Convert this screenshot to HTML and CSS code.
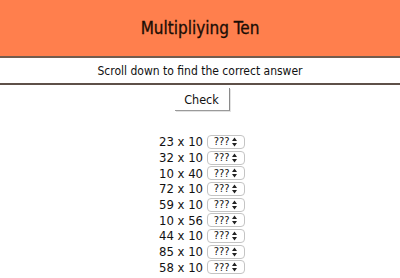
FILE: index.html
```html
<!DOCTYPE html>
<html>
<head>
<meta charset="utf-8">
<link rel="stylesheet" href="styles.css">
</head>
<body>
<header class="top">
  <h1 class="title">Multipliying Ten</h1>
</header>
<div class="info">Scroll down to find the correct answer</div>
<div class="actions"><button class="check">Check</button></div>
<div class="rows">
  <div class="row"><span class="q">23 x 10</span><span class="sel">???<svg class="arr" width="5" height="10" viewBox="0 0 5 10"><path d="M0 4 L2.5 0.5 L5 4Z M0 6 L2.5 9.5 L5 6Z" fill="#222"/></svg></span></div>
  <div class="row"><span class="q">32 x 10</span><span class="sel">???<svg class="arr" width="5" height="10" viewBox="0 0 5 10"><path d="M0 4 L2.5 0.5 L5 4Z M0 6 L2.5 9.5 L5 6Z" fill="#222"/></svg></span></div>
  <div class="row"><span class="q">10 x 40</span><span class="sel">???<svg class="arr" width="5" height="10" viewBox="0 0 5 10"><path d="M0 4 L2.5 0.5 L5 4Z M0 6 L2.5 9.5 L5 6Z" fill="#222"/></svg></span></div>
  <div class="row"><span class="q">72 x 10</span><span class="sel">???<svg class="arr" width="5" height="10" viewBox="0 0 5 10"><path d="M0 4 L2.5 0.5 L5 4Z M0 6 L2.5 9.5 L5 6Z" fill="#222"/></svg></span></div>
  <div class="row"><span class="q">59 x 10</span><span class="sel">???<svg class="arr" width="5" height="10" viewBox="0 0 5 10"><path d="M0 4 L2.5 0.5 L5 4Z M0 6 L2.5 9.5 L5 6Z" fill="#222"/></svg></span></div>
  <div class="row"><span class="q">10 x 56</span><span class="sel">???<svg class="arr" width="5" height="10" viewBox="0 0 5 10"><path d="M0 4 L2.5 0.5 L5 4Z M0 6 L2.5 9.5 L5 6Z" fill="#222"/></svg></span></div>
  <div class="row"><span class="q">44 x 10</span><span class="sel">???<svg class="arr" width="5" height="10" viewBox="0 0 5 10"><path d="M0 4 L2.5 0.5 L5 4Z M0 6 L2.5 9.5 L5 6Z" fill="#222"/></svg></span></div>
  <div class="row"><span class="q">85 x 10</span><span class="sel">???<svg class="arr" width="5" height="10" viewBox="0 0 5 10"><path d="M0 4 L2.5 0.5 L5 4Z M0 6 L2.5 9.5 L5 6Z" fill="#222"/></svg></span></div>
  <div class="row"><span class="q">58 x 10</span><span class="sel">???<svg class="arr" width="5" height="10" viewBox="0 0 5 10"><path d="M0 4 L2.5 0.5 L5 4Z M0 6 L2.5 9.5 L5 6Z" fill="#222"/></svg></span></div>
</div>
</body>
</html>
```
FILE: styles.css
```css
html, body {
  margin: 0;
  padding: 0;
  background: #fff;
  font-family: "DejaVu Sans Condensed", "DejaVu Sans", sans-serif;
  color: #111;
  overflow: hidden;
}
.top {
  height: 56px;
  background: #ff7f4d;
  display: flex;
  align-items: center;
  justify-content: center;
}
.title {
  margin: 0;
  font-size: 17px;
  font-weight: normal;
  color: #1a0d05;
  -webkit-text-stroke: 0.3px #1a0d05;
  white-space: nowrap;
}
.info {
  border-top: 2px solid #725c4e;
  border-bottom: 2px solid #5e5048;
  height: 25px;
  display: flex;
  align-items: center;
  justify-content: center;
  font-size: 12px;
  color: #111;
  white-space: nowrap;
}
.actions {
  display: flex;
  justify-content: center;
  padding-top: 3px;
  padding-left: 4px;
}
.check {
  width: 55px;
  height: 23px;
  background: #fff;
  border: none;
  border-right: 1px solid #8a8a8a;
  border-bottom: 1px solid #9a9a9a;
  box-shadow: 1px 1px 0 #e2e2e2;
  font-family: "DejaVu Sans Condensed", "DejaVu Sans", sans-serif;
  font-size: 12.5px;
  color: #111;
  padding: 1px 0 0 0;
}
.rows {
  display: flex;
  flex-direction: column;
  align-items: center;
  padding-top: 23px;
  padding-left: 4px;
}
.row {
  display: flex;
  align-items: center;
  height: 15.7px;
  font-size: 13px;
  white-space: nowrap;
}
.q {
  margin-right: 4px;
}
.sel {
  display: inline-flex;
  align-items: center;
  justify-content: center;
  gap: 3px;
  width: 35px;
  height: 12px;
  padding: 0 1px 0 0;
  border: 1px solid #c4c4c4;
  border-radius: 4px;
  font-size: 11px;
  color: #111;
  background: #fff;
}
.arr {
  display: block;
}
```
